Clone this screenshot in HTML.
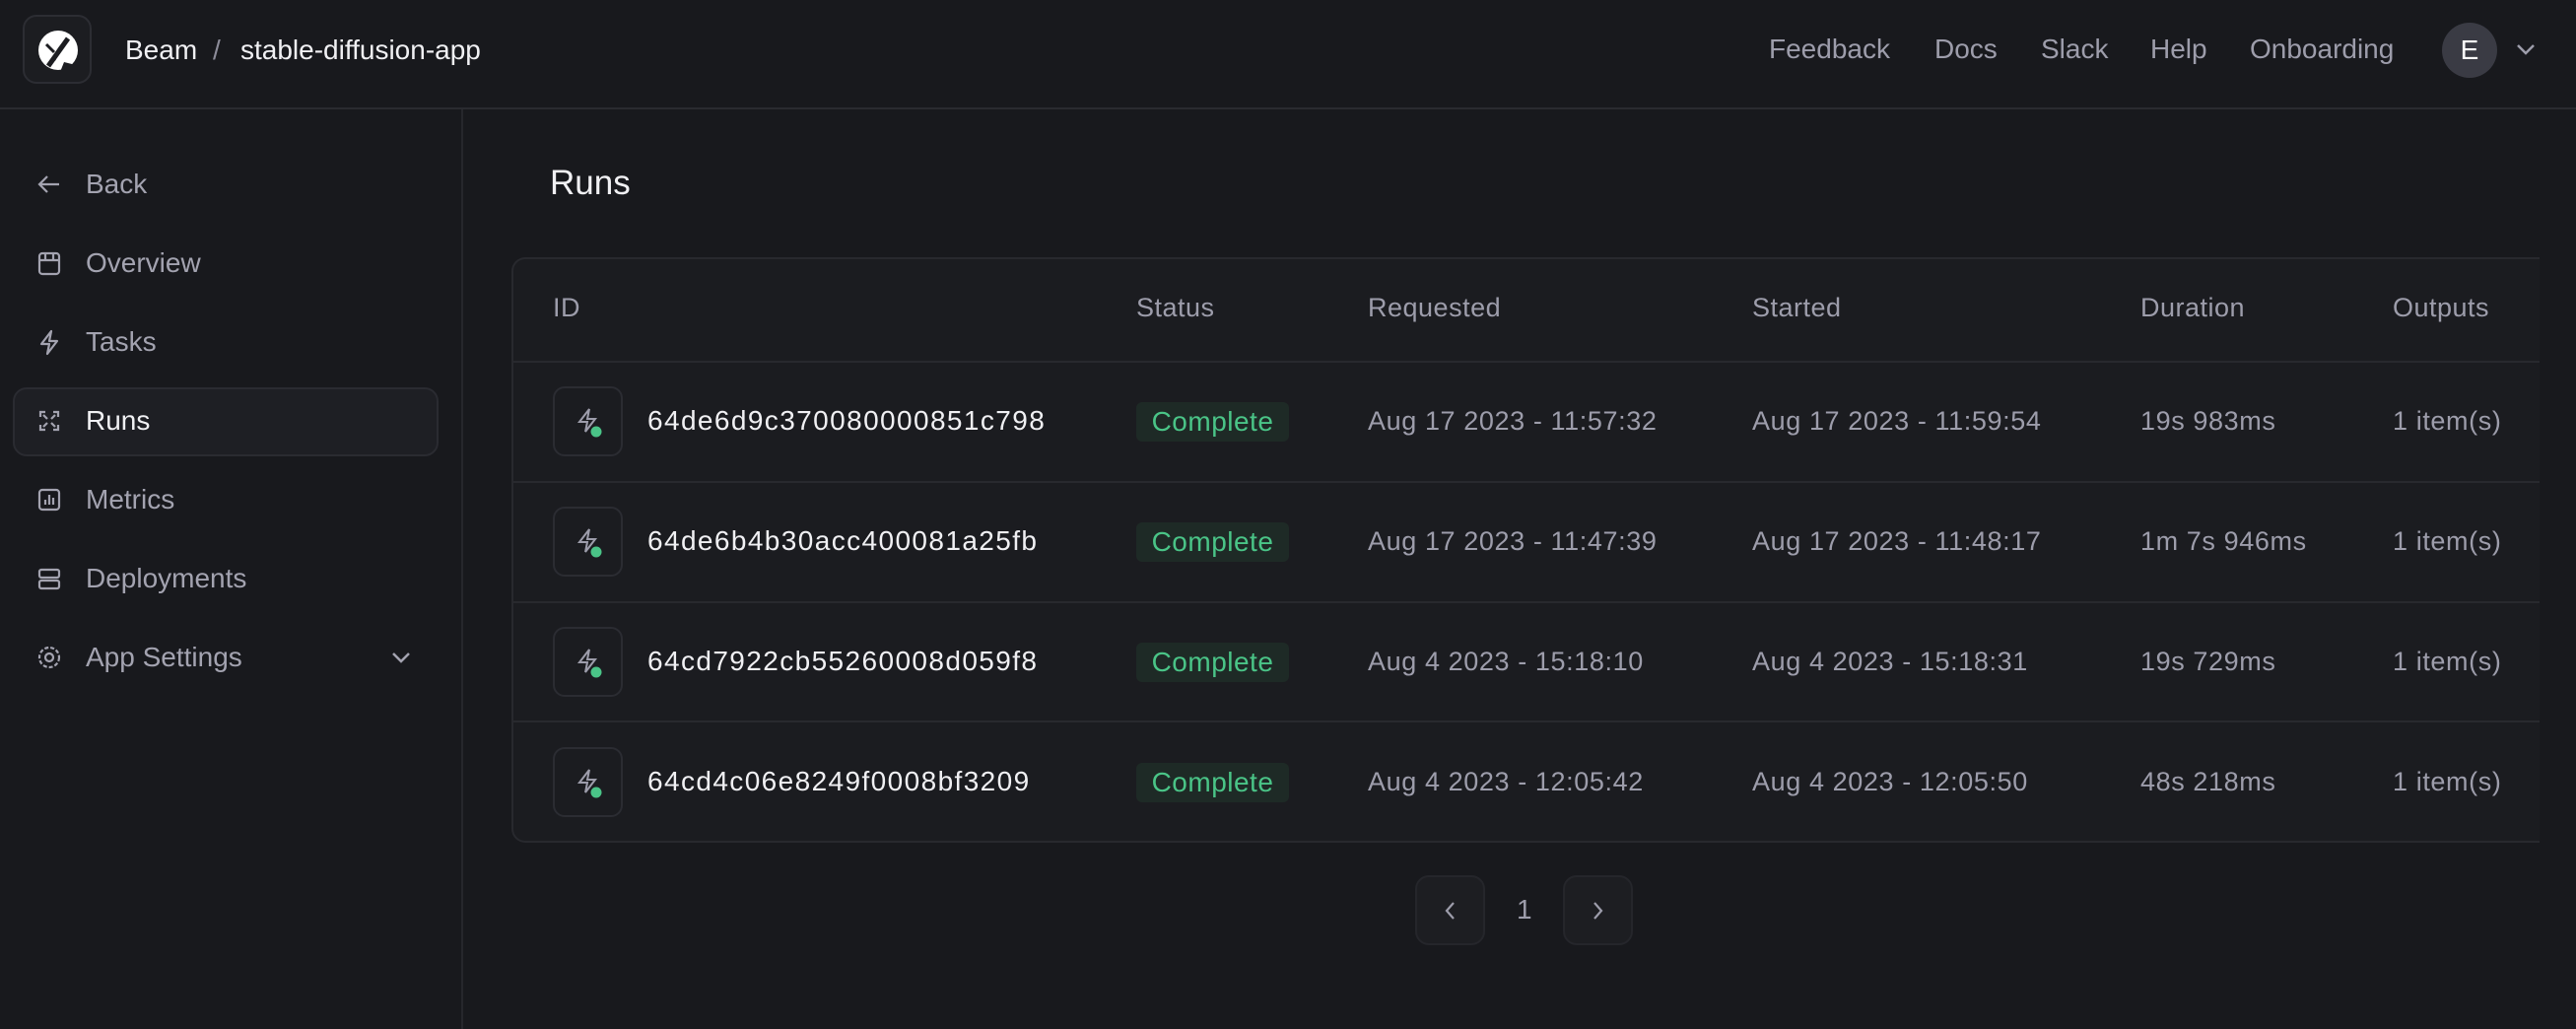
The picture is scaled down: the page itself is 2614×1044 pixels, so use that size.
<!DOCTYPE html>
<html><head><meta charset="utf-8">
<style>
*{box-sizing:border-box;margin:0;padding:0}
body{width:2614px;height:1044px;background:#18191d;font-family:"Liberation Sans",sans-serif;color:#e8e8ec;position:relative;overflow:hidden}
.a{position:absolute}
.hdr{left:0;top:0;width:2614px;height:111px;border-bottom:2px solid #2a2b30}
.logo{left:23px;top:15px;width:70px;height:70px;border:2px solid #2c2d33;border-radius:14px;background:#1c1d21}
.crumb{top:35px;font-size:28px;color:#f0f0f3}
.nav{top:34px;font-size:28px;color:#9d9dab}
.side{left:468px;top:111px;width:2px;height:933px;background:#26272c}
.item{left:87px;font-size:28px;color:#a3a3b0}
.ico{left:36px;width:28px;height:28px}
.sel{left:13px;top:393px;width:432px;height:70px;border:2px solid #2a2b31;border-radius:14px;background:#1e1f24}
.tbl{left:519px;top:261px;width:2058px;height:594px;border:2px solid #28292e;border-right:none;border-radius:14px 0 0 14px;background:#1b1c20}
.row{left:521px;width:2056px;height:2px;background:#28292e}
.th{top:297px;font-size:27px;color:#9d9dab;letter-spacing:.5px}
.td{font-size:27px;color:#9d9dab;letter-spacing:.6px}
.id{font-size:28px;color:#f0f0f3;left:657px;letter-spacing:1.4px}
.ib{left:561px;width:71px;height:71px;border:2px solid #2b2c32;border-radius:12px}
.badge{left:1153px;width:155px;height:40px;background:#1e2a26;border-radius:6px;color:#4ac487;font-size:28px;line-height:40px;text-align:center;letter-spacing:.5px}
.pg{top:888px;width:71px;height:71px;border:2px solid #25262b;background:#1d1e22;border-radius:14px}
</style></head><body>
<div class="a hdr"></div>
<div class="a logo"><svg width="66" height="66" viewBox="0 0 66 66"><circle cx="34" cy="34" r="20" fill="#fff"/><path d="M24 50 L44 22" stroke="#1c1d21" stroke-width="5"/><path d="M30 44 Q34 30 44 24" stroke="#1c1d21" stroke-width="3" fill="none"/><path d="M22 28 L30 36" stroke="#1c1d21" stroke-width="3"/><path d="M40 46 L56 50 L56 56 L36 56Z" fill="#1c1d21"/></svg></div>
<div class="a crumb" style="left:127px">Beam</div>
<div class="a crumb" style="left:216px;color:#8c8c99">/</div>
<div class="a crumb" style="left:244px">stable-diffusion-app</div>
<div class="a nav" style="left:1795px">Feedback</div>
<div class="a nav" style="left:1963px">Docs</div>
<div class="a nav" style="left:2071px">Slack</div>
<div class="a nav" style="left:2182px">Help</div>
<div class="a nav" style="left:2283px">Onboarding</div>
<div class="a" style="left:2478px;top:23px;width:56px;height:56px;border-radius:50%;background:#3a3b44;color:#fff;font-size:28px;text-align:center;line-height:56px">E</div>
<svg class="a" style="left:2551px;top:40px" width="24" height="20"><path d="M4 6 L12 14 L20 6" stroke="#9d9dab" stroke-width="2.5" fill="none"/></svg>

<div class="a side"></div>
<div class="a sel"></div>
<svg class="a ico" style="top:173px" viewBox="0 0 28 28"><path d="M24 14H5M12 6L4 14l8 8" stroke="#a3a3b0" stroke-width="2.2" fill="none"/></svg>
<div class="a item" style="top:171px">Back</div>
<svg class="a ico" style="top:253px" viewBox="0 0 28 28"><rect x="4" y="4" width="20" height="21" rx="3" stroke="#a3a3b0" stroke-width="2.2" fill="none"/><path d="M4 11H24M10 4v7M18 4v7" stroke="#a3a3b0" stroke-width="2.2"/></svg>
<div class="a item" style="top:251px">Overview</div>
<svg class="a ico" style="top:333px" viewBox="0 0 28 28"><path d="M16 3L6 16h8l-2 10 10-13h-8z" stroke="#a3a3b0" stroke-width="2.2" fill="none" stroke-linejoin="round"/></svg>
<div class="a item" style="top:331px">Tasks</div>
<svg class="a ico" style="top:413px" viewBox="0 0 28 28"><path d="M5 10V5h5M18 5h5v5M23 18v5h-5M10 23H5v-5M8 8l4 4M20 8l-4 4M20 20l-4-4M8 20l4-4" stroke="#a3a3b0" stroke-width="2.2" fill="none"/></svg>
<div class="a item" style="top:411px;color:#f0f0f3">Runs</div>
<svg class="a ico" style="top:493px" viewBox="0 0 28 28"><rect x="4" y="4" width="20" height="20" rx="3" stroke="#a3a3b0" stroke-width="2.2" fill="none"/><path d="M10 19v-5M14 19V9M18 19v-7" stroke="#a3a3b0" stroke-width="2.2"/></svg>
<div class="a item" style="top:491px">Metrics</div>
<svg class="a ico" style="top:573px" viewBox="0 0 28 28"><rect x="4" y="5" width="20" height="8" rx="2" stroke="#a3a3b0" stroke-width="2.2" fill="none"/><rect x="4" y="16" width="20" height="8" rx="2" stroke="#a3a3b0" stroke-width="2.2" fill="none"/></svg>
<div class="a item" style="top:571px">Deployments</div>
<svg class="a ico" style="top:653px" viewBox="0 0 28 28"><circle cx="14" cy="14" r="4" stroke="#a3a3b0" stroke-width="2.2" fill="none"/><circle cx="14" cy="14" r="10" stroke="#a3a3b0" stroke-width="2.2" fill="none" stroke-dasharray="4 2"/></svg>
<div class="a item" style="top:651px">App Settings</div>
<svg class="a" style="left:395px;top:657px" width="24" height="20"><path d="M4 6 L12 14 L20 6" stroke="#a3a3b0" stroke-width="2.5" fill="none"/></svg>

<div class="a" style="left:558px;top:166px;font-size:35px;color:#f0f0f3">Runs</div>
<div class="a tbl"></div>
<div class="a th" style="left:561px">ID</div>
<div class="a th" style="left:1153px">Status</div>
<div class="a th" style="left:1388px">Requested</div>
<div class="a th" style="left:1778px">Started</div>
<div class="a th" style="left:2172px">Duration</div>
<div class="a th" style="left:2428px">Outputs</div>
<div class="a row" style="top:366px"></div>
<div class="a row" style="top:488px"></div>
<div class="a row" style="top:610px"></div>
<div class="a row" style="top:731px"></div>

<div class="a ib" style="top:392px"><svg width="67" height="67"><path d="M35 21L25 34h8l-2 10 10-13h-8z" stroke="#9d9dab" stroke-width="2" fill="none"/><circle cx="42" cy="44" r="5.5" fill="#4ac487"/></svg></div>
<div class="a id" style="top:411px">64de6d9c370080000851c798</div>
<div class="a badge" style="top:408px">Complete</div>
<div class="a td" style="left:1388px;top:412px">Aug 17 2023 - 11:57:32</div>
<div class="a td" style="left:1778px;top:412px">Aug 17 2023 - 11:59:54</div>
<div class="a td" style="left:2172px;top:412px">19s 983ms</div>
<div class="a td" style="left:2428px;top:412px">1 item(s)</div>

<div class="a ib" style="top:514px"><svg width="67" height="67"><path d="M35 21L25 34h8l-2 10 10-13h-8z" stroke="#9d9dab" stroke-width="2" fill="none"/><circle cx="42" cy="44" r="5.5" fill="#4ac487"/></svg></div>
<div class="a id" style="top:533px">64de6b4b30acc400081a25fb</div>
<div class="a badge" style="top:530px">Complete</div>
<div class="a td" style="left:1388px;top:534px">Aug 17 2023 - 11:47:39</div>
<div class="a td" style="left:1778px;top:534px">Aug 17 2023 - 11:48:17</div>
<div class="a td" style="left:2172px;top:534px">1m 7s 946ms</div>
<div class="a td" style="left:2428px;top:534px">1 item(s)</div>

<div class="a ib" style="top:636px"><svg width="67" height="67"><path d="M35 21L25 34h8l-2 10 10-13h-8z" stroke="#9d9dab" stroke-width="2" fill="none"/><circle cx="42" cy="44" r="5.5" fill="#4ac487"/></svg></div>
<div class="a id" style="top:655px">64cd7922cb55260008d059f8</div>
<div class="a badge" style="top:652px">Complete</div>
<div class="a td" style="left:1388px;top:656px">Aug 4 2023 - 15:18:10</div>
<div class="a td" style="left:1778px;top:656px">Aug 4 2023 - 15:18:31</div>
<div class="a td" style="left:2172px;top:656px">19s 729ms</div>
<div class="a td" style="left:2428px;top:656px">1 item(s)</div>

<div class="a ib" style="top:758px"><svg width="67" height="67"><path d="M35 21L25 34h8l-2 10 10-13h-8z" stroke="#9d9dab" stroke-width="2" fill="none"/><circle cx="42" cy="44" r="5.5" fill="#4ac487"/></svg></div>
<div class="a id" style="top:777px">64cd4c06e8249f0008bf3209</div>
<div class="a badge" style="top:774px">Complete</div>
<div class="a td" style="left:1388px;top:778px">Aug 4 2023 - 12:05:42</div>
<div class="a td" style="left:1778px;top:778px">Aug 4 2023 - 12:05:50</div>
<div class="a td" style="left:2172px;top:778px">48s 218ms</div>
<div class="a td" style="left:2428px;top:778px">1 item(s)</div>

<div class="a pg" style="left:1436px"><svg width="67" height="67"><path d="M37 26L30 34l7 8" stroke="#9d9dab" stroke-width="2.2" fill="none"/></svg></div>
<div class="a" style="left:1539px;top:907px;font-size:28px;color:#9d9dab">1</div>
<div class="a pg" style="left:1586px"><svg width="67" height="67"><path d="M30 26l7 8-7 8" stroke="#9d9dab" stroke-width="2.2" fill="none"/></svg></div>
</body></html>
